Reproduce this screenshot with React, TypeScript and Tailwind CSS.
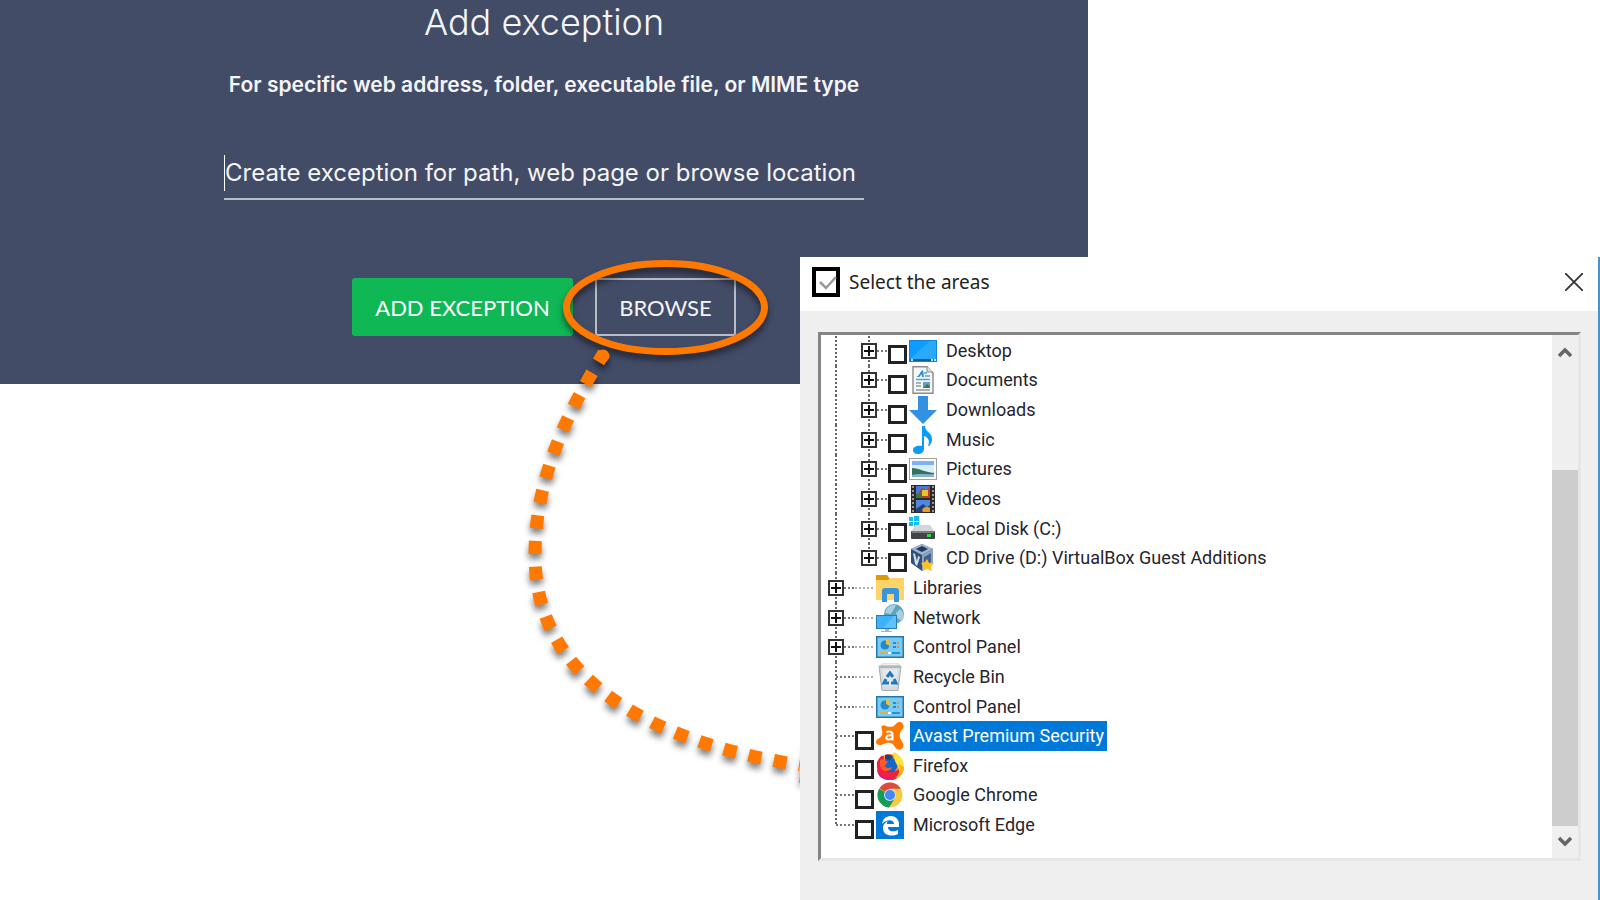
import type { ReactNode } from "react";
import clsx from "clsx";

type TreeItem = {
  id: string;
  label: string;
  icon: ReactNode;
  depth: 0 | 1;
  expandable?: boolean;
  checkable?: boolean;
  selected?: boolean;
  last?: boolean;
};

function Icon({ children }: { children: ReactNode }) {
  return (
    <svg viewBox="0 0 28 28" className="h-7 w-7 shrink-0" aria-hidden="true">
      {children}
    </svg>
  );
}

const desktopIcon = (
  <Icon>
    <rect x="0" y="3" width="28" height="22" fill="#1583d8" />
    <rect x="1" y="4" width="26" height="18" fill="#0c9cff" />
    <path d="M1 22 21 4h6v18z" fill="#2aaaff" />
    <rect x="1" y="22" width="26" height="2" fill="#0b5fa5" />
    <path d="M2 22h2v2H2zM22 22h2v2h-2zM25 22h2v2h-2z" fill="#bfe6ff" />
  </Icon>
);

const documentsIcon = (
  <Icon>
    <path d="M4 .7h14l6 6v20.600H4z" fill="#f7f7f7" stroke="#8c8c8c" strokeWidth="1.4" />
    <path d="M18 0v6h6" fill="#ddd" stroke="#8c8c8c" strokeWidth="1" />
    <path d="M7 11c3 0 4-6 7-7l1 7h-2l-.5-3-2 3z" fill="#2c8fd6" />
    <path d="M15 7h3M16 10h5M7 13.500h14" stroke="#48a5e6" strokeWidth="1.6" />
    <path d="M7 17h5M7 20h5M7 24h14" stroke="#8d9aa5" strokeWidth="1.3" />
    <rect x="14" y="16" width="7" height="6" fill="#6d9bd1" />
    <path d="m14 22 4-4 3 2v2z" fill="#3f7d4f" />
  </Icon>
);

const downloadsIcon = (
  <Icon>
    <path d="M9 0h10v14h9L14 28 0 14h9z" fill="#3391e4" />
  </Icon>
);

const musicIcon = (
  <Icon>
    <path
      d="M13 0h3c0 6 7 6 7 13 0 3-1 5-3 7h-1c2-5 1-8-4-10v13c0 3-3 5-6 5-2.500 0-5-1-5-4s4-5 9-4z"
      fill="#0b9df5"
    />
  </Icon>
);

const picturesIcon = (
  <Icon>
    <rect x="0.500" y="3.500" width="27" height="21" fill="#fff" stroke="#a0a0a0" />
    <rect x="3" y="6" width="22" height="16" fill="#d9effc" />
    <rect x="3" y="6" width="22" height="4" fill="#7fb1f7" />
    <path d="M3 13c7 0 12 4 22 5v4H3z" fill="#35715f" />
    <path d="M3 20c8-2 14 0 22-1v3H3z" fill="#86b2cb" />
  </Icon>
);

const videosIcon = (
  <Icon>
    <rect x="2" y="0" width="24" height="28" fill="#2b2b2b" />
    <path d="M4 1v26M24 1v26" stroke="#999" strokeWidth="2" strokeDasharray="2 2" />
    <rect x="7" y="1" width="14" height="12" fill="#4779d7" />
    <path d="m9 9 4-6 4 2 4-3v11H9z" fill="#bd3b2b" />
    <path d="M13 5h6v6h-6z" fill="#e6c22d" />
    <path d="M7 9h6v4H7z" fill="#367b38" />
    <rect x="7" y="15" width="14" height="12" fill="#5187e0" />
    <path d="m7 24 7-5 4 3 3-2v7H7z" fill="#253f7a" />
    <path d="M13 25c2-4 6-4 8-2v4h-7z" fill="#e29b25" />
  </Icon>
);

const diskIcon = (
  <Icon>
    <path d="M0 2h4v4H0zM5 1h5v5H5zM0 7h4v4H0zM5 7h5v5H5z" fill="#12bdf2" />
    <path d="M6 10h15l5 7H2z" fill="#d3d6d8" />
    <rect x="2" y="16" width="24" height="8" rx="1" fill="#414548" />
    <rect x="3" y="16" width="22" height="2" fill="#777d80" />
    <rect x="18" y="19" width="4" height="3" fill="#32d64b" />
  </Icon>
);

const cdDriveIcon = (
  <Icon>
    <path d="m13 0 11 5v14l-11 8-11-8V5z" fill="#31507a" />
    <path d="m2 5 11-5 11 5-11 6z" fill="#a0b4cc" />
    <path d="m7 5 6-3 6 3-6 3z" fill="#20395f" />
    <path d="M13 11 24 5v14l-11 8z" fill="#8ea3bd" />
    <path d="M15 13l7-4v9l-7 5z" fill="#45618b" />
    <path d="m4 9 2 1 2 7 1-5 2 1-3 9-2-2z" fill="#d5e0ec" />
    <path d="m18 15 2 4 5 0-3 4 1 4-5-2-4 2 0-5-2-3 4-1z" fill="#ffc21f" />
  </Icon>
);

const librariesIcon = (
  <Icon>
    <path d="M0 1h11l3 4v5H0z" fill="#dc9c05" />
    <path d="M0 6h12l3-2h13v22H0z" fill="#ffd365" />
    <path d="M6 28V17q0-3 3-3h11q3 0 3 3v11h-5v-8h-7v8z" fill="#3795dd" />
  </Icon>
);

const networkIcon = (
  <Icon>
    <circle cx="18" cy="10" r="10" fill="#5ba3c1" />
    <path d="M11 4c3-3 7-4 9-3l-2 4-3 5-6-1zM20 9l4-4c4 3 5 9 2 12l-5-3z" fill="#a9cfdd" />
    <rect x="0" y="11" width="21" height="14" fill="#247cb8" />
    <rect x="1" y="12" width="19" height="12" fill="#3fb1fa" />
    <path d="M7 24 18 12h2v12z" fill="#5ec2ff" />
    <path d="M9 25h4v2h3v1H5v-1h4z" fill="#a9b6bf" />
  </Icon>
);

const controlPanelIcon = (
  <Icon>
    <rect x="0" y="3" width="28" height="22" fill="#2478a7" />
    <rect x="1.500" y="4.500" width="25" height="19" fill="#76ccf8" />
    <circle cx="9" cy="12" r="4.500" fill="#2489ce" />
    <path d="M10 11V6a5 5 0 0 1 4 7z" fill="#f1bd37" />
    <path d="M17 10h3M17 14h3" stroke="#2489ce" strokeWidth="2" />
    <path d="M21 9h2v2h-2zM21 13h2v2h-2z" fill="#ec8b37" />
    <path d="M4 20h8" stroke="#e5ae3d" strokeWidth="2" />
    <path d="M12 20h3" stroke="#fff" strokeWidth="2" />
    <path d="M16 20h8" stroke="#268fd9" strokeWidth="2" />
  </Icon>
);

const recycleIcon = (
  <Icon>
    <path d="M6 1 10 0h9l4 1v2H5z" fill="#f2f2f2" stroke="#d2d2d2" strokeWidth="0.800" />
    <path d="M3 3h22l-3 24.500H6z" fill="#d8dbdd" stroke="#a8acaf" />
    <path d="M6 6h16l-2 17H8z" fill="#e5e8ea" />
    <path d="M3 3h22v2H3z" fill="#b4b7ba" />
    <path
      d="m11 14 3-4 3 4M18 16l2 4h-5M13 20H8l2-4"
      fill="none"
      stroke="#1c79c2"
      strokeWidth="3"
    />
  </Icon>
);

const avastIcon = (
  <Icon>
    <path
      d="M5.500 6C5 3 8 2.500 10 4c3 1.500 7 1 9-1 2-3 5-4 7-2 3 3 1 6-1 8-2 3-1.500 6 0 9 2 3 3.500 5 1.500 8s-6 2-7.500-1c-2-4-5-5-9-4-2 .5-3 1.500-5 2-3 .5-5-1-5-3 0-3 4-3.500 5.500-6C7 11 6 9 5.500 6z"
      fill="#ff7800"
    />
    <path
      d="M10.500 10.500c2-2 6-1 6 2v6M16.500 13.500c-7-1.500-8 4-4 4 2 0 4-1 4-3"
      fill="none"
      stroke="#fff"
      strokeWidth="2"
    />
  </Icon>
);

const firefoxIcon = (
  <Icon>
    <circle cx="14" cy="15" r="13" fill="#ff9519" />
    <path d="M1 10C4 4 6 3 8 4c-2 5 3 14 9 15 4 0 7-2 8-6 4 8-3 15-11 15S0 22 1 10z" fill="#f5203c" />
    <path d="M1 17c3 8 10 9 16 8l-5 3C5 27 1 23 1 17z" fill="#d41b7f" />
    <circle cx="14" cy="13" r="7.500" fill="#1767c6" />
    <path d="M9 3c4-1 7 0 8 2l-3 3-5-1z" fill="#233f91" />
    <path d="M4 8c3-1 5 0 8 2l-3 3c0 4 5 3 7 2-1 5-10 6-12-1z" fill="#ff5a2a" />
    <path d="M17 0c7 2 11 8 11 15 0 5-3 9-7 11 5-9 0-12-2-17-1-3-1-6-2-9z" fill="#ffe23a" />
    <path d="M22 12c3 5 2 10-3 14 6-1 9-5 9-11z" fill="#ffaf20" />
  </Icon>
);

const chromeIcon = (
  <Icon>
    <circle cx="14" cy="14" r="12.500" fill="#fcc83e" />
    <path d="M14 14 3.500 7.200A12.500 12.500 0 0 1 24.800 7.700H14z" fill="#db4c3f" />
    <path d="M14 14 3.200 7.700A12.500 12.500 0 0 0 13 26.500L18.500 18z" fill="#149c5a" />
    <circle cx="14" cy="14" r="6" fill="#cfe0fb" />
    <circle cx="14" cy="14" r="5" fill="#4688f4" />
  </Icon>
);

const edgeIcon = (
  <Icon>
    <rect width="28" height="28" fill="#0078d7" />
    <path
      d="M6 13C7 7 11 5 15 5c5 0 8 4 8 8v3H12c0 5 6 5 10 3v4c-6 3-15 2-15-6 0-4 3-6 5-7-1 1-1 2-1 3h7c0-5-8-5-12 0z"
      fill="#fff"
    />
  </Icon>
);

const treeItems: TreeItem[] = [
  { id: "desktop", label: "Desktop", icon: desktopIcon, depth: 1, expandable: true, checkable: true },
  { id: "documents", label: "Documents", icon: documentsIcon, depth: 1, expandable: true, checkable: true },
  { id: "downloads", label: "Downloads", icon: downloadsIcon, depth: 1, expandable: true, checkable: true },
  { id: "music", label: "Music", icon: musicIcon, depth: 1, expandable: true, checkable: true },
  { id: "pictures", label: "Pictures", icon: picturesIcon, depth: 1, expandable: true, checkable: true },
  { id: "videos", label: "Videos", icon: videosIcon, depth: 1, expandable: true, checkable: true },
  { id: "disk-c", label: "Local Disk (C:)", icon: diskIcon, depth: 1, expandable: true, checkable: true },
  {
    id: "cd-drive",
    label: "CD Drive (D:) VirtualBox Guest Additions",
    icon: cdDriveIcon,
    depth: 1,
    expandable: true,
    checkable: true,
    last: true,
  },
  { id: "libraries", label: "Libraries", icon: librariesIcon, depth: 0, expandable: true },
  { id: "network", label: "Network", icon: networkIcon, depth: 0, expandable: true },
  { id: "control-panel", label: "Control Panel", icon: controlPanelIcon, depth: 0, expandable: true },
  { id: "recycle-bin", label: "Recycle Bin", icon: recycleIcon, depth: 0 },
  { id: "control-panel-2", label: "Control Panel", icon: controlPanelIcon, depth: 0 },
  { id: "avast", label: "Avast Premium Security", icon: avastIcon, depth: 0, checkable: true, selected: true },
  { id: "firefox", label: "Firefox", icon: firefoxIcon, depth: 0, checkable: true },
  { id: "chrome", label: "Google Chrome", icon: chromeIcon, depth: 0, checkable: true },
  { id: "edge", label: "Microsoft Edge", icon: edgeIcon, depth: 0, checkable: true, last: true },
];

// Dotted connector lines of the tree
function VLine({ half }: { half?: boolean }) {
  return (
    <span
      className={clsx(
        "col-start-1 row-start-1 w-[2px] self-start bg-[repeating-linear-gradient(to_bottom,#666_0_2px,transparent_2px_4px)]",
        half ? "h-1/2" : "h-full"
      )}
    />
  );
}

function HLine({ className }: { className?: string }) {
  return (
    <span
      className={clsx(
        "h-[2px] bg-[repeating-linear-gradient(to_right,#777_0_2px,transparent_2px_4px)]",
        className
      )}
    />
  );
}

function TreeRow({ item }: { item: TreeItem }) {
  const labelClass = clsx(
    "flex items-center self-stretch px-[3px] whitespace-nowrap",
    item.selected && "bg-[#0078d7] text-white"
  );

  return (
    <li className="flex min-h-0 flex-1 items-center pl-[7px]">
      {item.depth === 1 && (
        <span className="mr-[17px] grid w-4 justify-items-center self-stretch">
          <VLine />
        </span>
      )}
      <span className="grid w-4 items-center justify-items-center self-stretch">
        <VLine half={item.last} />
        {item.expandable ? (
          <button
            type="button"
            aria-label={`Expand ${item.label}`}
            className="col-start-1 row-start-1 grid h-4 w-4 place-items-center border-2 border-[#333] bg-white"
          >
            <svg viewBox="0 0 10 10" className="h-[10px] w-[10px]">
              <path d="M0 5h10M5 0v10" stroke="#111" strokeWidth="2" />
            </svg>
          </button>
        ) : (
          <HLine className="col-start-1 row-start-1 w-2 justify-self-end" />
        )}
      </span>
      <HLine className="w-[11px]" />
      {item.checkable ? (
        <input
          id={item.id}
          type="checkbox"
          className="mt-2 mr-[2px] h-[19px] w-[19px] shrink-0 appearance-none border-[3px] border-[#222] bg-white"
        />
      ) : (
        <HLine className="mr-[1px] w-5 opacity-60" />
      )}
      <span className="mr-[6px]">{item.icon}</span>
      {item.checkable ? (
        <label htmlFor={item.id} className={labelClass}>
          {item.label}
        </label>
      ) : (
        <span className={labelClass}>{item.label}</span>
      )}
    </li>
  );
}

function ExceptionPanel() {
  return (
    <section className="flex h-96 w-[68%] flex-col items-center bg-[#434c67] font-['Inter'] text-[#f4f5f8]">
      <h1 className="text-[36px] leading-[44px] font-light">Add exception</h1>
      <p className="mt-[26px] text-[21px] leading-[30px] font-semibold">
        For specific web address, folder, executable file, or MIME type
      </p>
      <div className="mt-[55px] flex h-[45px] w-[640px] border-b-2 border-[#b9bdc8]">
        <span className="h-9 w-px bg-white" />
        <input
          type="text"
          aria-label="Exception path"
          placeholder="Create exception for path, web page or browse location"
          className="h-9 flex-1 bg-transparent text-[24px] outline-none placeholder:text-[#f4f5f8] placeholder:opacity-100"
        />
      </div>
      <div className="mt-[78px] flex gap-[22px] font-['Lato'] text-[22px]">
        <button type="button" className="h-[58px] w-[221px] rounded-[3px] bg-[#10b755] text-white">
          ADD EXCEPTION
        </button>
        <button type="button" className="h-[58px] w-[141px] rounded-[3px] border-2 border-[#b9bdc8]">
          BROWSE
        </button>
      </div>
    </section>
  );
}

// Orange marker round the Browse button and the dotted trail to the dialog
function Callout() {
  return (
    <svg
      width="840"
      height="820"
      viewBox="0 0 840 820"
      className="pointer-events-none absolute top-0 left-0 drop-shadow-[0_5px_3px_rgba(0,0,0,0.5)]"
      fill="none"
      stroke="#ff7800"
      aria-hidden="true"
    >
      <ellipse cx="665.500" cy="307.500" rx="99" ry="44" strokeWidth="7" />
      <path
        d="M604 353C566 414 535 480 535 555C535 680 650 742 800 765"
        strokeWidth="13"
        strokeDasharray="13 12.600"
        strokeDashoffset="2.500"
      />
      <circle cx="603" cy="356" r="6.500" fill="#ff7800" stroke="none" />
      <path d="m799 783 28-18-22-23" fill="#ff7800" stroke="none" />
    </svg>
  );
}

function Chevron({ down }: { down?: boolean }) {
  return (
    <svg viewBox="0 0 14 12" className="h-3 w-[14px]" fill="none" stroke="#666" strokeWidth="3.500">
      <path d={down ? "M1 2l6 6 6-6" : "M1 10l6-6 6 6"} />
    </svg>
  );
}

function ScrollBar() {
  return (
    <div className="flex w-[26px] flex-col bg-[#efefef]">
      <button type="button" aria-label="Scroll up" className="grid h-[34px] place-items-center">
        <Chevron />
      </button>
      <div className="flex-[101]" />
      <div className="flex-[356] bg-[#cdcdcd]" />
      <button type="button" aria-label="Scroll down" className="grid h-8 place-items-center">
        <Chevron down />
      </button>
    </div>
  );
}

function AreasDialog() {
  return (
    <section
      role="dialog"
      aria-labelledby="areas-title"
      className="absolute top-[257px] right-0 bottom-0 left-1/2 border-r-2 border-[#4694cf] bg-[#efefef]"
    >
      <header className="flex h-[54px] items-center bg-white pr-[15px] pb-1 pl-3">
        <svg viewBox="0 0 28 30" className="h-[30px] w-7" aria-hidden="true">
          <rect x="2" y="2" width="24" height="26" fill="#fff" stroke="#000" strokeWidth="4" />
          <path d="m8 15 6 6L24 10" fill="none" stroke="#999" strokeWidth="2.500" />
        </svg>
        <h2 id="areas-title" className="ml-[9px] font-['Noto_Sans'] text-[19px] text-[#222]">
          Select the areas
        </h2>
        <button type="button" aria-label="Close" className="ml-auto">
          <svg viewBox="0 0 18 18" className="h-[18px] w-[18px]" stroke="#333" strokeWidth="1.800">
            <path d="m0 0 18 18M18 0 0 18" />
          </svg>
        </button>
      </header>
      <div className="mt-[21px] mr-[17px] ml-[18px] flex h-[529px] border-3 border-t-[#858585] border-r-[#e6e6e6] border-b-[#e6e6e6] border-l-[#858585] bg-white">
        <ul className="flex h-[505px] flex-1 flex-col pt-px font-['Roboto'] text-[18px] leading-none text-[#25252d]">
          {treeItems.map((item) => (
            <TreeRow key={item.id} item={item} />
          ))}
        </ul>
        <ScrollBar />
      </div>
    </section>
  );
}

export default function App() {
  return (
    <main className="relative min-h-screen overflow-hidden bg-white">
      <ExceptionPanel />
      <Callout />
      <AreasDialog />
    </main>
  );
}
